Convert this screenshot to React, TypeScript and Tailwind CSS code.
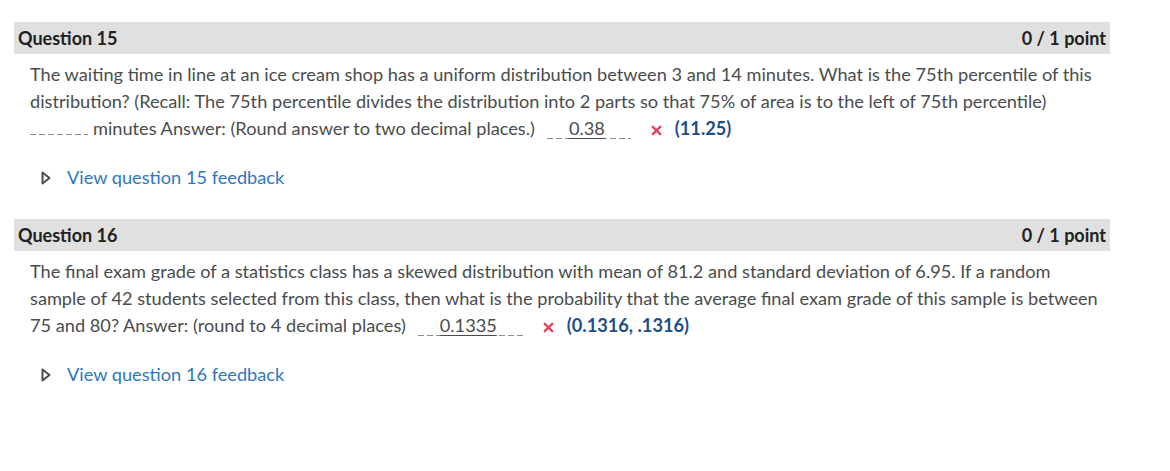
import React from 'react';

interface Question {
  num: number;
  text: React.ReactNode;
}

const dashed =
  'bg-[repeating-linear-gradient(90deg,#8a8c8e_0_6px,transparent_6px_9px)] bg-no-repeat bg-bottom bg-[length:100%_1px]';

const Blank = ({ value }: { value: string }) => (
  <span className={`inline-block pl-[22px] pr-[26px] ml-[12px] leading-[22px] ${dashed}`}>
    <span className="underline decoration-[#494c4e] underline-offset-[3px]">{value}</span>
  </span>
);

const Wrong = () => (
  <svg viewBox="0 0 12 12" className="inline-block w-[11px] h-[11px] ml-[20px] mr-[13px] align-[-1px]">
    <path d="M2 2 L10 10 M10 2 L2 10" stroke="#e3455a" strokeWidth="2.6" strokeLinecap="round" />
  </svg>
);

const Feedback = ({ num }: { num: number }) => (
  <div className="flex items-center mt-[22px] ml-[27px]">
    <svg viewBox="0 0 10 14" className="w-[10px] h-[14px]">
      <path d="M1.5 1.5 L8.5 7 L1.5 12.5 Z" fill="none" stroke="#494c4e" strokeWidth="2" strokeLinejoin="round" />
    </svg>
    <span className="ml-[16px] text-[#2f77c2]">View question {num} feedback</span>
  </div>
);

const QuestionBlock = ({ num, text }: Question) => (
  <div>
    <div className="flex justify-between items-center bg-[#e0e0e0] h-[32px] px-1 font-bold text-[18px] text-[#202122]">
      <span>Question {num}</span>
      <span>0 / 1 point</span>
    </div>
    <div className="pl-4 pr-[4px] pt-[7px] leading-[27px] text-[#494c4e]">{text}</div>
  </div>
);

export default function App() {
  return (
    <div className="min-h-[471px] bg-white pt-[22px] pl-[14px] w-[1110px] text-[18.2px]" style={{ fontFamily: 'Lato, "Open Sans", sans-serif' }}>
      <QuestionBlock
        num={15}
        text={
          <>
            The waiting time in line at an ice cream shop has a uniform distribution between 3 and 14 minutes. What is the 75th percentile of this distribution? (Recall: The 75th percentile divides the distribution into 2 parts so that 75% of area is to the left of 75th percentile){' '}
            <span className={`inline-block w-[58px] h-[18px] align-baseline mr-[5px] ${dashed}`}></span>
            minutes Answer: (Round answer to two decimal places.)
            <Blank value="0.38" />
            <Wrong />
            <span className="font-bold text-[#1c4f8a]">(11.25)</span>
          </>
        }
      />
      <Feedback num={15} />
      <div className="mt-[28px]">
        <QuestionBlock
          num={16}
          text={
            <>
              The final exam grade of a statistics class has a skewed distribution with mean of 81.2 and standard deviation of 6.95. If a random sample of 42 students selected from this class, then what is the probability that the average final exam grade of this sample is between 75 and 80? Answer: (round to 4 decimal places)
              <Blank value="0.1335" />
              <Wrong />
              <span className="font-bold text-[#1c4f8a]">(0.1316, .1316)</span>
            </>
          }
        />
      </div>
      <Feedback num={16} />
    </div>
  );
}
